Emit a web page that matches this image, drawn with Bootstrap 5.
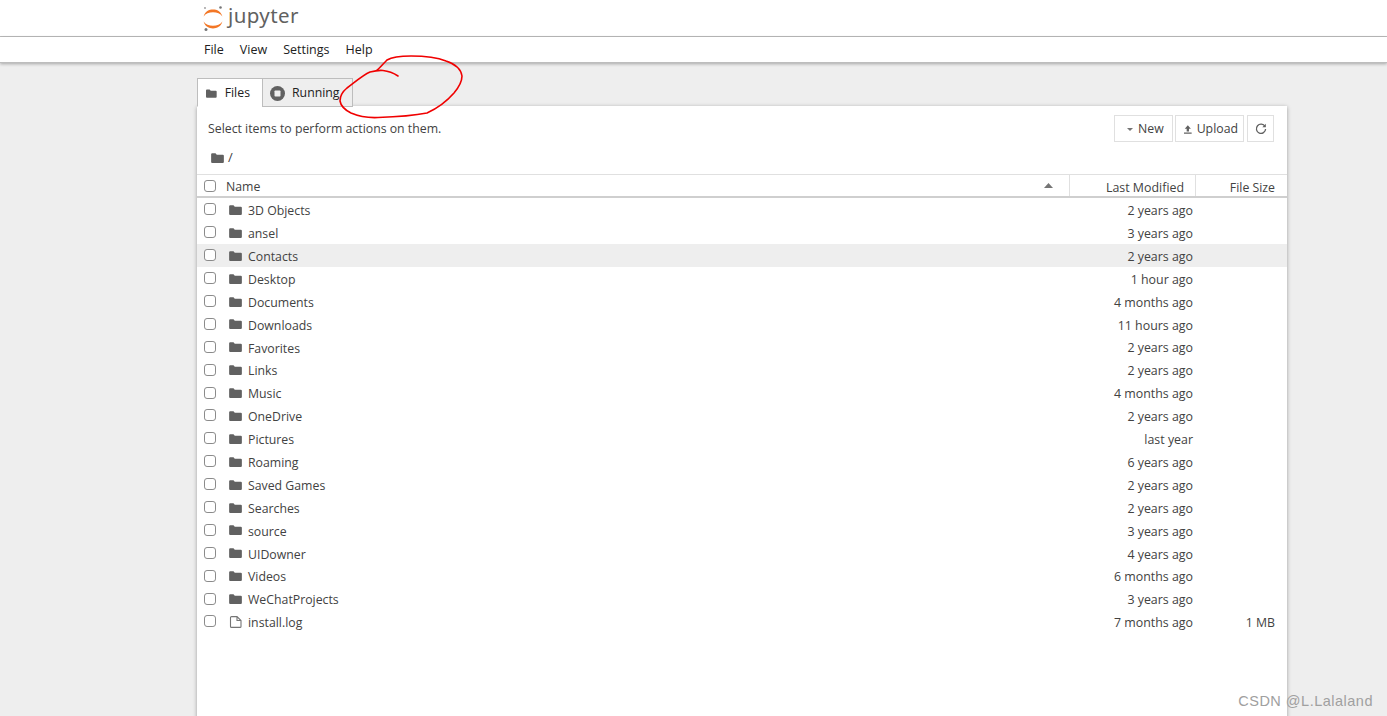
<!DOCTYPE html>
<html lang="en">
<head>
<meta charset="utf-8">
<title>Jupyter</title>
<link href="https://cdn.jsdelivr.net/npm/bootstrap@5.3.0/dist/css/bootstrap.min.css" rel="stylesheet">
<style>
html,body{height:716px;overflow:hidden}
body{background:#eeeeee;font-family:"Open Sans","Noto Sans",sans-serif;font-size:12.3px;color:#424242;position:relative}
.top-bar{height:37px;background:#fff;border-bottom:1px solid #bdbdbd;padding-left:203px}
.logo-word{font-family:"Noto Sans",sans-serif;font-size:20.5px;color:#616161;letter-spacing:.4px;line-height:1;margin-left:2px;margin-top:-6px}
.menu-bar{height:26px;background:#fff;border-bottom:1px solid #bdbdbd;box-shadow:0 1px 3px rgba(0,0,0,.3);padding-left:204px;padding-top:2px;gap:16px;color:#212121;font-size:12.5px}
.jp-main{padding-left:197px;padding-top:15px}
.jp-tabs{height:28px}
.jp-tab{height:29px;padding:2px 12px 0 8px;border:1px solid #bdbdbd;border-right-width:0;background:#eee;gap:8px;color:#212121}
.jp-tab.is-active{background:#fff;border-bottom-color:#fff;position:relative;z-index:2;width:65px}
.jp-tab.is-last{border-right-width:1px;width:91px;padding-right:0;padding-left:7px;gap:7px}
.jp-panel{width:1090px;height:620px;background:#fff;box-shadow:0 1px 4px rgba(0,0,0,.35)}
.tool-row{height:47px;padding:9px 13px 0 11px}
.tool-intro{margin-top:8px}
.tool-btn{height:27px;padding:2px 5px 0 0;font-size:12.3px;color:#424242;background:#fff;border:1px solid #e0e0e0;border-radius:0;gap:5px;margin-left:2px}
.tool-new{width:59px;padding-left:12px}
.tool-upload{width:69px;padding-left:8px}
.tool-refresh{width:27px;padding:0;margin-left:3px}
.crumb{height:20px;padding-left:14px;margin-top:-5px;gap:4px;font-size:13px}
.head-row{height:24px;margin-top:6px;border-top:1px solid #e0e0e0;border-bottom:2px solid #cfcfcf;color:#424242}
.file-row{height:22.9px;color:#424242}
.file-row.is-hover{background:#eeeeee}
.jp-check{width:12px;height:12px;margin:0 0 0 7px;border:1px solid #8a8a8a;border-radius:2px;flex:none;background:#fff}
.file-ico{margin-left:13px;margin-right:6px;margin-top:1px;flex:none}
.cell-name{flex:1 1 auto;padding-top:4px}
.cell-date{width:130px;text-align:right;flex:none;margin-right:12px;padding-top:4px;font-size:12.4px}
.cell-size{width:82px;text-align:right;flex:none;padding-right:12px;padding-top:4px}
.head-name{flex:1 1 auto;padding-left:10px;padding-top:4px}
.head-sort{width:26px;flex:none;padding-left:1px}
.head-date{width:127px;border-left:1px solid #e0e0e0;border-right:1px solid #e0e0e0;text-align:right;padding-right:11px;height:21px;line-height:26px;flex:none;font-size:12.4px}
.head-size{width:91px;text-align:right;padding-right:12px;padding-top:6px;flex:none}
.scribble{position:absolute;left:0;top:0;z-index:5;pointer-events:none}
.mark-text{position:absolute;right:14px;top:691px;font-family:"Liberation Sans",sans-serif;font-size:14.5px;color:#a0a0a0;letter-spacing:.5px;z-index:5}
</style>
</head>
<body>
<header class="top-bar d-flex align-items-center">
  <svg width="23" height="27" viewBox="1 0 23 27" aria-hidden="true">
    <path d="M1.6 11.5C3 6.4 7 4.6 11 4.6s8 1.8 9.4 6.9C18.4 8.4 15 7.2 11 7.2s-7.4 1.2-9.4 4.3z" fill="#f37726"/>
    <path d="M1.6 16.5C3 21.6 7 23.4 11 23.4s8-1.8 9.4-6.9C18.4 19.6 15 20.8 11 20.8s-7.4-1.2-9.4-4.3z" fill="#f37726"/>
    <circle cx="18.5" cy="2.5" r="1.3" fill="#767677"/><circle cx="4" cy="24.5" r="1.5" fill="#767677"/><circle cx="3" cy="3" r=".9" fill="#989798"/>
  </svg>
  <span class="logo-word">jupyter</span>
</header>
<nav class="menu-bar d-flex align-items-center">
  <span>File</span><span>View</span><span>Settings</span><span>Help</span>
</nav>
<main class="jp-main">
  <div class="jp-tabs d-flex">
    <div class="jp-tab is-active d-flex align-items-center">
      <svg width="14" height="11" viewBox="0 0 14 11"><path d="M0 1.500A1.200 1.200 0 0 1 1.200.3h3.600l1.400 1.500h6.600A1.200 1.200 0 0 1 14 3v6.800a1.200 1.200 0 0 1-1.200 1.200H1.200A1.200 1.200 0 0 1 0 9.800z" fill="#616161"/></svg>
      <span>Files</span>
    </div>
    <div class="jp-tab is-last d-flex align-items-center">
      <svg width="15" height="15" viewBox="0 0 15 15"><circle cx="7.500" cy="7.500" r="7.500" fill="#616161"/><rect x="4.500" y="4.500" width="6" height="6" rx=".8" fill="#eee"/></svg>
      <span>Running</span>
    </div>
  </div>
  <section class="jp-panel d-flex flex-column">
    <div class="tool-row d-flex justify-content-between">
      <div class="tool-intro lh-1">Select items to perform actions on them.</div>
      <div class="d-flex">
        <button type="button" class="btn tool-btn tool-new d-flex align-items-center"><svg width="6" height="3" viewBox="0 0 8 4"><path d="M0 0h8L4 4z" fill="#757575"/></svg><span>New</span></button>
        <button type="button" class="btn tool-btn tool-upload d-flex align-items-center"><svg width="9" height="11" viewBox="0 0 10 11"><path d="M5 0l4 4.500H6.500V8h-3V4.500H1zM0 9.500h10V11H0z" fill="#616161"/></svg><span>Upload</span></button>
        <button type="button" class="btn tool-btn tool-refresh d-flex align-items-center justify-content-center"><svg width="12" height="12" viewBox="0 0 12 12"><path d="M10 3.500A4.600 4.600 0 1 0 10.600 6" fill="none" stroke="#616161" stroke-width="1.300"/><path d="M10.800 .8v3.500H7.300z" fill="#616161"/></svg></button>
      </div>
    </div>
    <div class="crumb d-flex align-items-center">
      <svg width="13" height="10" viewBox="0 0 14 11"><path d="M0 1.500A1.200 1.200 0 0 1 1.200.3h3.600l1.400 1.500h6.600A1.200 1.200 0 0 1 14 3v6.800a1.200 1.200 0 0 1-1.200 1.200H1.200A1.200 1.200 0 0 1 0 9.800z" fill="#616161"/></svg>
      <span>/</span>
    </div>
    <div class="head-row d-flex align-items-center">
      <input class="jp-check form-check-input mt-0" type="checkbox" aria-label="Select all">
      <div class="head-name">Name</div>
      <div class="head-sort"><svg width="9" height="5" viewBox="0 0 9 5"><path d="M0 5h9L4.500 0z" fill="#757575"/></svg></div>
      <div class="head-date">Last Modified</div>
      <div class="head-size">File Size</div>
    </div>
    <div id="rows"></div>
  </section>
</main>
<svg class="scribble" width="1387" height="716" viewBox="0 0 1387 716" aria-hidden="true">
  <path d="M398 76C392 72 388 71 383 70.500C378 70 374 71 370 72C363 75 355 82 347 88C342 92 340 97 340 101C341 107 345 110 351 113C358 116 367 118 378 117.500C394 117 412 116 427 113C438 108 447 101 454 93C459 87 462 82 462 76C461 69 455 64 446 61C436 57 423 56 411 56C402 56 392 57 387 60C383 64 380 68 376 71" fill="none" stroke="#f00000" stroke-width="1.600" stroke-linecap="round"/>
</svg>
<div class="mark-text">CSDN @L.Lalaland</div>
<script>
var data=[["3D Objects","2 years ago"],["ansel","3 years ago"],["Contacts","2 years ago"],["Desktop","1 hour ago"],["Documents","4 months ago"],["Downloads","11 hours ago"],["Favorites","2 years ago"],["Links","2 years ago"],["Music","4 months ago"],["OneDrive","2 years ago"],["Pictures","last year"],["Roaming","6 years ago"],["Saved Games","2 years ago"],["Searches","2 years ago"],["source","3 years ago"],["UIDowner","4 years ago"],["Videos","6 months ago"],["WeChatProjects","3 years ago"],["install.log","7 months ago","1 MB"]];
var folder='<svg class="file-ico" width="13" height="10" viewBox="0 0 14 11"><path d="M0 1.500A1.200 1.200 0 0 1 1.200.3h3.600l1.400 1.500h6.600A1.200 1.200 0 0 1 14 3v6.800a1.200 1.200 0 0 1-1.200 1.200H1.200A1.200 1.200 0 0 1 0 9.800z" fill="#616161"/></svg>';
var doc='<svg class="file-ico" width="13" height="12" viewBox="0 0 13 12"><path d="M1.500 1.600a1 1 0 0 1 1-1h5.500L12 4.500v5.900a1 1 0 0 1-1 1H2.500a1 1 0 0 1-1-1z M8 .6V4.500h4" fill="none" stroke="#757575" stroke-width="1.100"/></svg>';
document.getElementById('rows').innerHTML=data.map(function(r,i){
 return '<div class="file-row d-flex align-items-center'+(i==2?' is-hover':'')+'"><input class="jp-check form-check-input mt-0" type="checkbox" aria-label="select">'+(r[2]?doc:folder)+'<div class="cell-name">'+r[0]+'</div><div class="cell-date">'+r[1]+'</div><div class="cell-size">'+(r[2]||'')+'</div></div>';
}).join('');
</script>
<script src="https://cdn.jsdelivr.net/npm/bootstrap@5.3.0/dist/js/bootstrap.bundle.min.js"></script>
</body>
</html>
